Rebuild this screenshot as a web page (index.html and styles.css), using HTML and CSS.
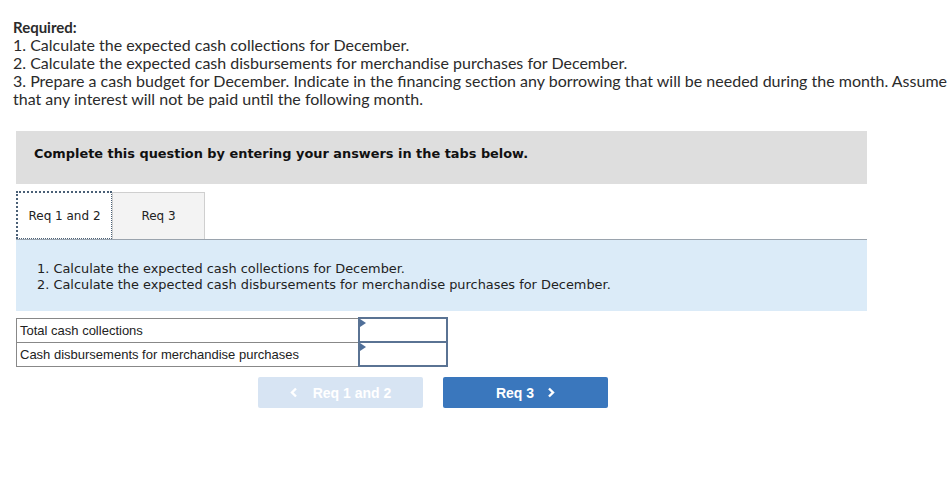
FILE: index.html
```html
<!DOCTYPE html>
<html>
<head>
<meta charset="utf-8">
<link rel="stylesheet" href="styles.css">
</head>
<body>
<div class="page">
  <div class="required">
    <div class="req-title">Required:</div>
    <div>1. Calculate the expected cash collections for December.</div>
    <div>2. Calculate the expected cash disbursements for merchandise purchases for December.</div>
    <div>3. Prepare a cash budget for December. Indicate in the financing section any borrowing that will be needed during the month. Assume that any interest will not be paid until the following month.</div>
  </div>
  <div class="question">
    <div class="banner">Complete this question by entering your answers in the tabs below.</div>
    <div class="tabs">
      <div class="tab active">Req 1 and 2</div>
      <div class="tab">Req 3</div>
    </div>
    <div class="panel">
      <div>1. Calculate the expected cash collections for December.</div>
      <div>2. Calculate the expected cash disbursements for merchandise purchases for December.</div>
    </div>
    <table class="answers">
      <tr><td class="label">Total cash collections</td><td class="input"><span class="flag"></span></td></tr>
      <tr><td class="label">Cash disbursements for merchandise purchases</td><td class="input"><span class="flag"></span></td></tr>
    </table>
    <div class="nav">
      <div class="btn prev"><svg class="chev" width="8" height="11" viewBox="0 0 8 11"><path d="M6 1.5 L2 5.5 L6 9.5" fill="none" stroke="#fff" stroke-width="2.4"/></svg>Req 1 and 2</div>
      <div class="btn next">Req 3<svg class="chev" width="8" height="11" viewBox="0 0 8 11"><path d="M2 1.5 L6 5.5 L2 9.5" fill="none" stroke="#fff" stroke-width="2.4"/></svg></div>
    </div>
  </div>
</div>
</body>
</html>
```
FILE: styles.css
```css
html, body { margin: 0; padding: 0; background: #fff; overflow: hidden; }
.page { padding: 18px 0 0 13px; }
.required {
  width: 945px;
  font-family: Lato, "Open Sans", sans-serif;
  font-size: 16px;
  line-height: 18px;
  color: #2b2b2b;
}
.req-title { font-weight: bold; font-size: 15px; }
.question { margin-left: 3px; margin-top: 23px; width: 851px; }
.banner {
  background: #dedede;
  height: 53px;
  box-sizing: border-box;
  padding: 15px 18px 0;
  font-family: "DejaVu Sans", Verdana, sans-serif;
  font-weight: bold;
  font-size: 12.9px;
  color: #111;
}
.tabs { display: flex; margin-top: 7px; align-items: flex-end; }
.tab {
  font-family: "DejaVu Sans", Verdana, sans-serif;
  font-size: 12px;
  color: #222;
  box-sizing: border-box;
  width: 93px;
  height: 47px;
  display: flex; align-items: center; justify-content: center;
  background: #f3f3f3;
  border: 1px solid #cfcfcf;
  border-bottom: none;
}
.tab.active {
  width: 96px; height: 48px;
  background: #fff;
  border-color: #4a6076;
  border-width: 2px 1px 1px 2px;
  border-style: dotted;
}
.panel {
  background: #dbebf8;
  border-top: 1px solid #9aa3ad;
  height: 72px;
  box-sizing: border-box;
  padding: 21px 21px 0;
  font-family: "DejaVu Sans", Verdana, sans-serif;
  font-size: 12.9px;
  line-height: 16px;
  color: #222;
}
.answers {
  margin-top: 6px;
  border-collapse: collapse;
  font-family: "Liberation Sans", Arial, sans-serif;
  font-size: 13px;
  color: #222;
}
.answers td { height: 22px; padding: 0; }
.answers .label { width: 338px; border: 1px solid #888; padding-left: 3px; }
.answers .input {
  width: 86px;
  border: 2px solid #5a7393;
  position: relative;
}
.flag {
  position: absolute; left: 0; top: 0;
  width: 0; height: 0;
  border-top: 4px solid transparent;
  border-bottom: 4px solid transparent;
  border-left: 6px solid #4f6f99;
}
.nav { display: flex; gap: 20px; margin-top: 10px; padding-left: 242px; }
.btn {
  width: 165px; height: 31px;
  display: flex; align-items: center; justify-content: center;
  font-family: "Liberation Sans", Arial, sans-serif;
  font-weight: bold;
  font-size: 14px;
  border-radius: 2px;
}
.btn.prev { background: #d7e4f3; color: #fff; }
.btn.next { background: #3a77bd; color: #fff; }
.prev .chev { margin-right: 15px; }
.next .chev { margin-left: 13px; }
```
